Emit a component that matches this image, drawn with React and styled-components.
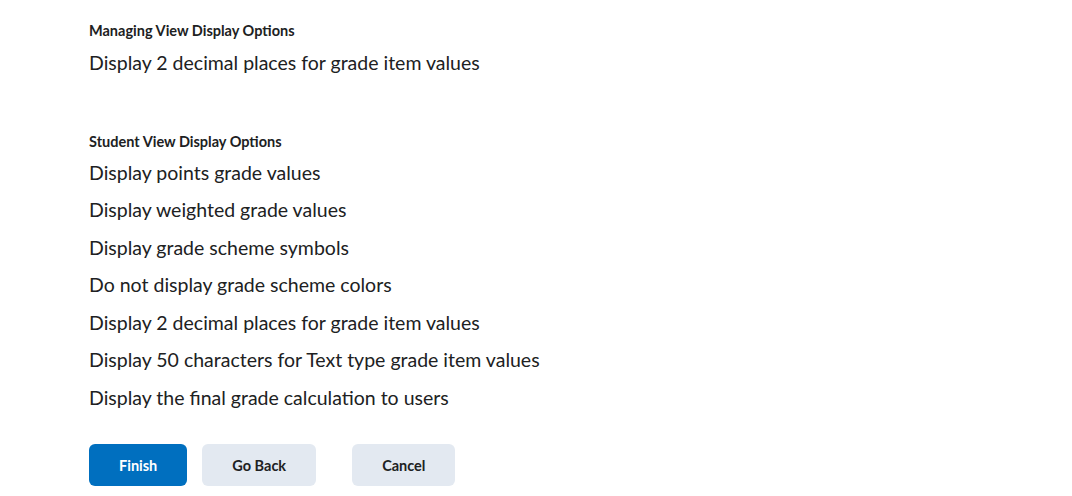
import React from "react";
import styled, { createGlobalStyle } from "styled-components";

const Global = createGlobalStyle`
  html, body { margin: 0; padding: 0; background: #ffffff; }
  body { font-family: Lato, "Open Sans", sans-serif; color: #202122; }
`;

const Page = styled.div`
  width: 1072px;
  height: 496px;
  box-sizing: border-box;
  padding: 21px 0 0 89px;
  display: flex;
  flex-direction: column;
`;

const Section = styled.section`
  display: flex;
  flex-direction: column;
  margin-bottom: ${(p) => p.$gap || 0}px;
`;

const Heading = styled.h2`
  margin: 0 0 ${(p) => p.$space ?? 2}px;
  font-size: 14.5px;
  font-weight: 700;
  line-height: 20px;
  color: #202122;
`;

const Option = styled.div`
  font-size: 19.5px;
  font-weight: 400;
  line-height: 37.5px;
  height: 37.5px;
  color: #202122;
`;

const Actions = styled.div`
  display: flex;
  gap: 15px;
  margin-top: 28px;
`;

const Button = styled.button`
  height: 42px;
  padding: 0 30px;
  border: none;
  border-radius: 6px;
  font-family: Lato, "Open Sans", sans-serif;
  font-size: 14.5px;
  font-weight: 700;
  cursor: pointer;
  background: ${(p) => (p.$primary ? "#006fbf" : "#e3e9f1")};
  color: ${(p) => (p.$primary ? "#ffffff" : "#202122")};
  margin-left: ${(p) => p.$offset || 0}px;
`;

const managing = ["Display 2 decimal places for grade item values"];
const student = [
  "Display points grade values",
  "Display weighted grade values",
  "Display grade scheme symbols",
  "Do not display grade scheme colors",
  "Display 2 decimal places for grade item values",
  "Display 50 characters for Text type grade item values",
  "Display the final grade calculation to users",
];

export default function App() {
  return (
    <>
      <Global />
      <Page>
        <Section $gap={50}>
          <Heading $space={3}>Managing View Display Options</Heading>
          {managing.map((t) => (
            <Option key={t}>{t}</Option>
          ))}
        </Section>
        <Section>
          <Heading>Student View Display Options</Heading>
          {student.map((t) => (
            <Option key={t}>{t}</Option>
          ))}
        </Section>
        <Actions>
          <Button $primary>Finish</Button>
          <Button>Go Back</Button>
          <Button $offset={21}>Cancel</Button>
        </Actions>
      </Page>
    </>
  );
}
